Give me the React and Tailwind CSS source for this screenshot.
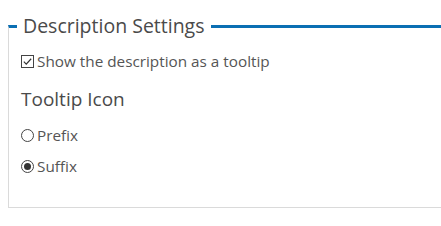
import { useState } from 'react';

function CheckBox({ checked }) {
  return (
    <span className="w-[13px] h-[13px] border border-[#444] flex items-center justify-center shrink-0">
      {checked && (
        <svg viewBox="0 0 12 12" className="w-[11px] h-[11px]" fill="none" stroke="#333" strokeWidth="1.3">
          <path d="M2 6.2l2.6 2.6L10 3" />
        </svg>
      )}
    </span>
  );
}

function Radio({ checked }) {
  return (
    <span className="w-[13px] h-[13px] rounded-full border border-[#444] flex items-center justify-center shrink-0">
      {checked && <span className="w-[7px] h-[7px] rounded-full bg-[#333]"></span>}
    </span>
  );
}

export default function App() {
  const [showTip, setShowTip] = useState(true);
  const [pos, setPos] = useState('suffix');

  return (
    <div className="w-[441px] h-[226px] bg-white font-['Open_Sans',sans-serif] text-[#555] pl-2 pt-3">
      <fieldset className="border-t-[3px] border-t-[#0b6fb3] border-x border-b border-x-[#dadada] border-b-[#dadada] h-[196px] w-[440px] pl-3">
        <legend className="text-[19.5px] leading-7 px-1.5 -ml-1 text-[#4a4a4a]">Description Settings</legend>

        <label className="flex items-center gap-[3px] mt-[11px] text-[15.3px] leading-5 cursor-pointer" onClick={() => setShowTip(!showTip)}>
          <CheckBox checked={showTip} />
          <span>Show the description as a tooltip</span>
        </label>

        <h3 className="text-[19px] leading-7 mt-[14px] text-[#4a4a4a]">Tooltip Icon</h3>

        <label className="flex items-center gap-[3px] mt-[12px] text-[15.3px] leading-5 cursor-pointer" onClick={() => setPos('prefix')}>
          <Radio checked={pos === 'prefix'} />
          <span>Prefix</span>
        </label>
        <label className="flex items-center gap-[3px] mt-[11px] text-[15.3px] leading-5 cursor-pointer" onClick={() => setPos('suffix')}>
          <Radio checked={pos === 'suffix'} />
          <span>Suffix</span>
        </label>
      </fieldset>
    </div>
  );
}
